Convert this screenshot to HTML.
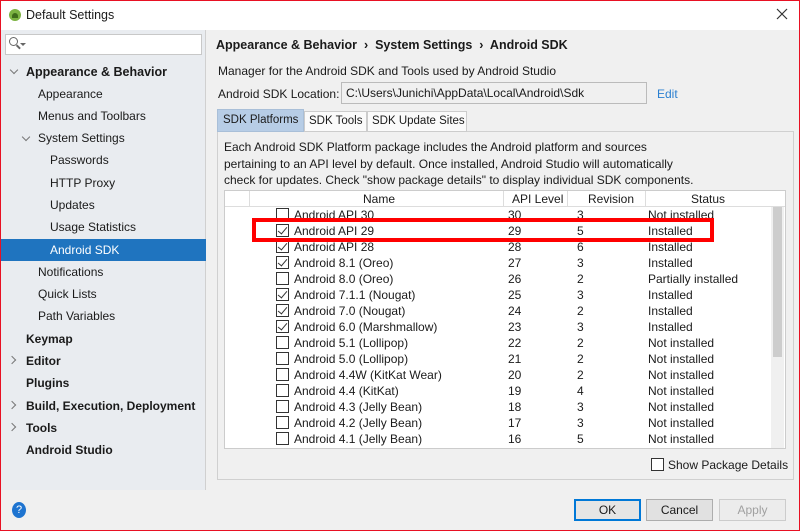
<!DOCTYPE html>
<html><head><style>
*{margin:0;padding:0;box-sizing:border-box}
body{width:800px;height:531px;overflow:hidden;font-family:"Liberation Sans",sans-serif;font-size:12px;color:#1a1a1a;position:relative;background:#f0f0f0}
.a{position:absolute;white-space:nowrap}
.b{font-weight:bold}
.cb{position:absolute;width:13px;height:13px;border:1px solid #333;background:#fff}
.ck::after{content:"";position:absolute;left:3px;top:0px;width:4px;height:8px;border:solid #333;border-width:0 1.3px 1.3px 0;transform:rotate(40deg)}
.chev{position:absolute;width:6px;height:6px;border:solid #777;border-width:0 1.3px 1.3px 0}
</style></head><body>
<div class="a" style="left:0;top:0;width:800px;height:531px;border:1px solid #e81123;z-index:9;pointer-events:none"></div>
<div class="a" style="left:1px;top:1px;width:798px;height:29px;background:#fff"></div>
<div class="a" style="left:9px;top:9px;width:12px;height:12px;border-radius:50%;background:#7cb342"></div>
<div class="a" style="left:12px;top:13px;width:6px;height:5px;border-radius:3px 3px 0 0;background:#3e6b1a"></div>
<div class="a" style="left:26px;top:8px;font-size:12.5px">Default Settings</div>
<svg class="a" style="left:776px;top:8px" width="12" height="12"><path d="M1 1L11 11M11 1L1 11" stroke="#333" stroke-width="1.2"/></svg>
<!-- left panel -->
<div class="a" style="left:1px;top:30px;width:205px;height:460px;background:#e9ecf0;border-right:1px solid #d0d0d0"></div>
<div class="a" style="left:5px;top:34px;width:197px;height:21px;background:#fff;border:1px solid #c8c8c8"></div>
<div class="a" style="left:9px;top:37px;width:9px;height:9px;border:1.5px solid #666;border-radius:50%"></div>
<div class="a" style="left:16px;top:46px;width:5px;height:1.5px;background:#666;transform:rotate(45deg)"></div>
<div class="a" style="left:20px;top:43px;border:3px solid transparent;border-top:3px solid #666"></div>
<div class="chev" style="left:11px;top:67px;transform:rotate(45deg)"></div>
<div class="a b" style="left:26px;top:65px;font-size:12.5px">Appearance &amp; Behavior</div>
<div class="a" style="left:38px;top:87px">Appearance</div>
<div class="a" style="left:38px;top:109px">Menus and Toolbars</div>
<div class="chev" style="left:23px;top:134px;transform:rotate(45deg)"></div>
<div class="a" style="left:38px;top:131px">System Settings</div>
<div class="a" style="left:50px;top:153px">Passwords</div>
<div class="a" style="left:50px;top:176px">HTTP Proxy</div>
<div class="a" style="left:50px;top:198px">Updates</div>
<div class="a" style="left:50px;top:220px">Usage Statistics</div>
<div class="a" style="left:1px;top:239px;width:205px;height:22px;background:#1f74bf"></div>
<div class="a" style="left:50px;top:243px;color:#fff">Android SDK</div>
<div class="a" style="left:38px;top:265px">Notifications</div>
<div class="a" style="left:38px;top:287px">Quick Lists</div>
<div class="a" style="left:38px;top:309px">Path Variables</div>
<div class="a b" style="left:26px;top:332px">Keymap</div>
<div class="chev" style="left:9px;top:357px;transform:rotate(-45deg)"></div>
<div class="a b" style="left:26px;top:354px">Editor</div>
<div class="a b" style="left:26px;top:376px">Plugins</div>
<div class="chev" style="left:9px;top:402px;transform:rotate(-45deg)"></div>
<div class="a b" style="left:26px;top:399px">Build, Execution, Deployment</div>
<div class="chev" style="left:9px;top:424px;transform:rotate(-45deg)"></div>
<div class="a b" style="left:26px;top:421px">Tools</div>
<div class="a b" style="left:26px;top:443px">Android Studio</div>
<!-- right -->
<div class="a b" style="left:216px;top:38px;font-size:12.5px">Appearance &amp; Behavior &nbsp;›&nbsp; System Settings &nbsp;›&nbsp; Android SDK</div>
<div class="a" style="left:218px;top:64px">Manager for the Android SDK and Tools used by Android Studio</div>
<div class="a" style="left:218px;top:87px">Android SDK Location:</div>
<div class="a" style="left:341px;top:82px;width:306px;height:22px;border:1px solid #bbb;background:#f0f0f0;padding:3px 4px">C:\Users\Junichi\AppData\Local\Android\Sdk</div>
<div class="a" style="left:657px;top:87px;color:#2a7fd0">Edit</div>
<div class="a" style="left:217px;top:131px;width:577px;height:349px;border:1px solid #d0d0d0;background:#f0f0f0"></div>
<div class="a" style="left:217px;top:109px;width:87px;height:23px;background:#b7cde6;border:1px solid #a9bfd8;padding:4px 5px;font-size:11.5px">SDK Platforms</div>
<div class="a" style="left:304px;top:111px;width:63px;height:21px;background:#fafafa;border:1px solid #ccc;padding:3px 4px;font-size:11.5px">SDK Tools</div>
<div class="a" style="left:367px;top:111px;width:100px;height:21px;background:#fafafa;border:1px solid #ccc;padding:3px 4px;font-size:11.5px">SDK Update Sites</div>
<div class="a" style="left:224px;top:139px;line-height:16.5px">Each Android SDK Platform package includes the Android platform and sources<br>pertaining to an API level by default. Once installed, Android Studio will automatically<br>check for updates. Check "show package details" to display individual SDK components.</div>
<div class="a" style="left:224px;top:190px;width:562px;height:259px;background:#fff;border:1px solid #ccc"></div>
<div class="a" style="left:225px;top:191px;width:560px;height:16px;border-bottom:1px solid #ddd;background:#fff"></div>
<div class="a" style="left:249px;top:191px;width:1px;height:16px;background:#ddd"></div>
<div class="a" style="left:503px;top:191px;width:1px;height:16px;background:#ddd"></div>
<div class="a" style="left:567px;top:191px;width:1px;height:16px;background:#ddd"></div>
<div class="a" style="left:645px;top:191px;width:1px;height:16px;background:#ddd"></div>
<div class="a" style="left:363px;top:192px">Name</div>
<div class="a" style="left:512px;top:192px">API Level</div>
<div class="a" style="left:588px;top:192px">Revision</div>
<div class="a" style="left:691px;top:192px">Status</div>
<div class="a" style="left:771px;top:207px;width:13px;height:241px;background:#f0f0f0"></div>
<div class="a" style="left:773px;top:207px;width:9px;height:150px;background:#cdcdcd"></div>
<div id="rows"></div>
<div class="a" style="left:252px;top:218px;width:462px;height:24px;border:4px solid #f00"></div>
<div class="cb" style="left:651px;top:458px"></div>
<div class="a" style="left:668px;top:458px">Show Package Details</div>
<!-- bottom -->
<div class="a" style="left:12px;top:502px;width:14px;height:16px;border-radius:50%;background:#1e74d0;color:#fff;font-size:11px;text-align:center;line-height:16px">?</div>
<div class="a" style="left:574px;top:499px;width:67px;height:22px;border:2px solid #0078d7;background:#e5e5e5;text-align:center;line-height:18px">OK</div>
<div class="a" style="left:646px;top:499px;width:67px;height:22px;border:1px solid #adadad;background:#e1e1e1;text-align:center;line-height:20px">Cancel</div>
<div class="a" style="left:719px;top:499px;width:67px;height:22px;border:1px solid #ccc;background:#ececec;color:#a0a0a0;text-align:center;line-height:20px">Apply</div>
<script>
var d=[["Android API 30",30,3,"Not installed",0],["Android API 29",29,5,"Installed",1],["Android API 28",28,6,"Installed",1],["Android 8.1 (Oreo)",27,3,"Installed",1],["Android 8.0 (Oreo)",26,2,"Partially installed",0],["Android 7.1.1 (Nougat)",25,3,"Installed",1],["Android 7.0 (Nougat)",24,2,"Installed",1],["Android 6.0 (Marshmallow)",23,3,"Installed",1],["Android 5.1 (Lollipop)",22,2,"Not installed",0],["Android 5.0 (Lollipop)",21,2,"Not installed",0],["Android 4.4W (KitKat Wear)",20,2,"Not installed",0],["Android 4.4 (KitKat)",19,4,"Not installed",0],["Android 4.3 (Jelly Bean)",18,3,"Not installed",0],["Android 4.2 (Jelly Bean)",17,3,"Not installed",0],["Android 4.1 (Jelly Bean)",16,5,"Not installed",0]];
var h="";d.forEach(function(r,i){var y=207+i*16;
h+='<div class="cb'+(r[4]==1?' ck':'')+'" style="left:276px;top:'+(y+1)+'px"></div>';
h+='<div class="a" style="left:294px;top:'+(y+1)+'px">'+r[0]+'</div><div class="a" style="left:508px;top:'+(y+1)+'px">'+r[1]+'</div><div class="a" style="left:577px;top:'+(y+1)+'px">'+r[2]+'</div><div class="a" style="left:648px;top:'+(y+1)+'px">'+r[3]+'</div>';});
document.getElementById("rows").innerHTML=h;
</script>
</body></html>
